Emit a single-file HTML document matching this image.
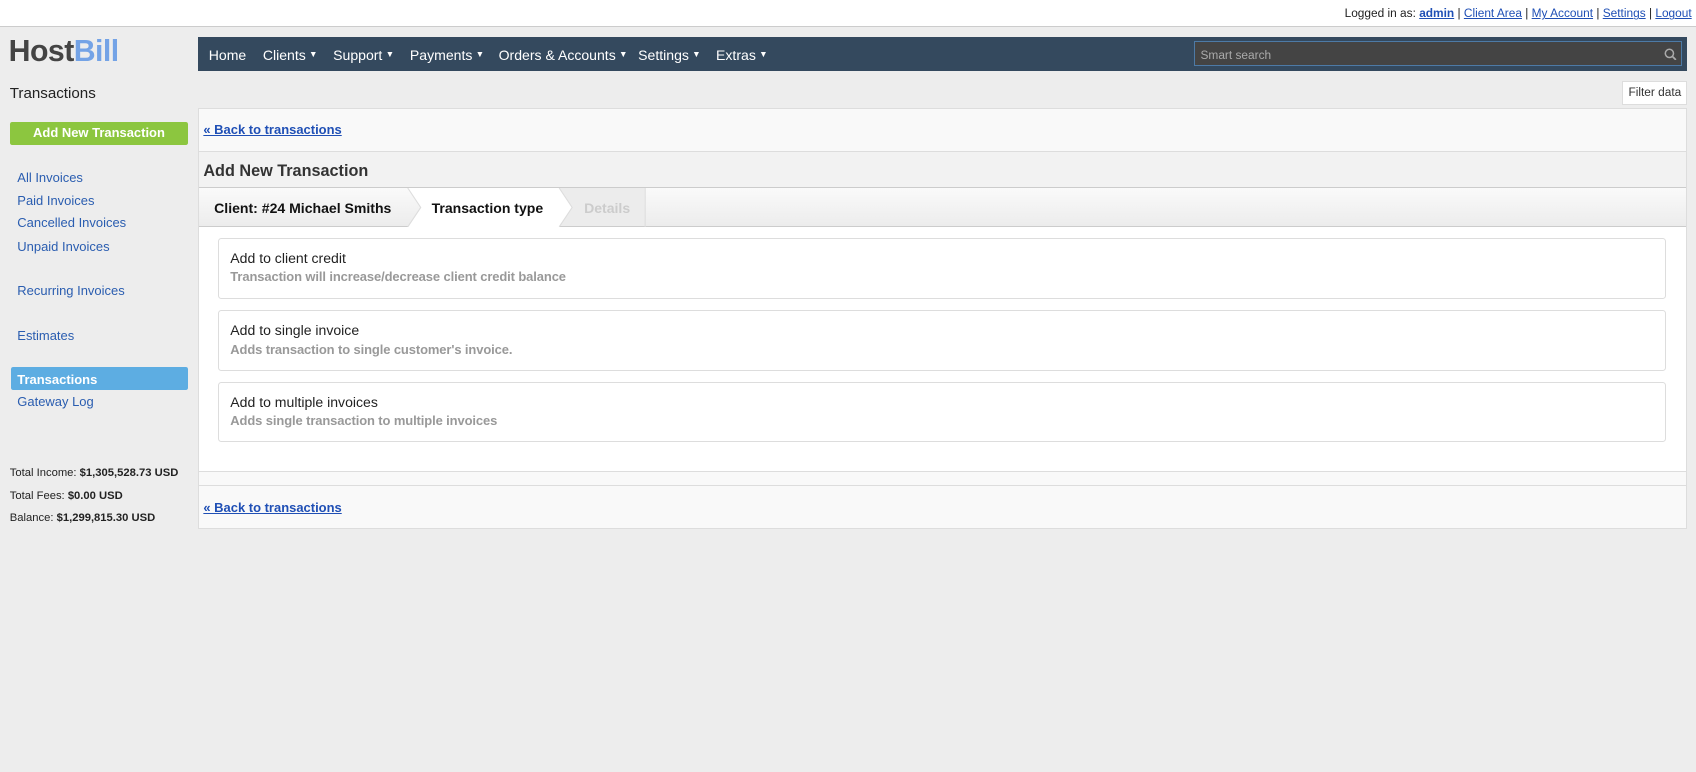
<!DOCTYPE html>
<html><head><meta charset="utf-8"><style>
html,body{margin:0;padding:0}
body{width:1568px;height:714px;background:#ededed;font-family:"Liberation Sans",Arial,sans-serif;position:relative;overflow:hidden;zoom:1.08163}
.a{position:absolute}
a{color:#1f4fb5}
.top{left:0;top:0;width:1568px;height:24px;background:#fff;border-bottom:1px solid #ccc}
.top div{position:absolute;right:4px;top:6px;font-size:11px;color:#222}
.top a{color:#1f4fb5}
.nav{left:183px;top:34px;width:1377px;height:32px;background:#34495e}
.nav span{position:absolute;top:9px;color:#fff;font-size:13px}
.nav span i{font-style:normal;font-size:8px;margin-left:3px;vertical-align:2px}
.search{left:1104px;top:38px;width:451px;height:23px;background:#444;border:1px solid #4d7aa6;box-sizing:border-box}
.side a{position:absolute;left:16px;font-size:12px;color:#2a5db0;text-decoration:none}
.box{left:202px;width:1338px;height:56px;background:#fff;border:1px solid #ddd;border-radius:3px;box-sizing:border-box}
.box b{position:absolute;left:10px;top:10px;font-size:13px;font-weight:normal;color:#222}
.box s{position:absolute;left:10px;top:28px;font-size:12px;font-weight:bold;color:#999;text-decoration:none;letter-spacing:-0.1px}
.tot{left:9px;font-size:10.4px;color:#222}
</style></head><body>
<div class="a top"><div>Logged in as: <a href="#"><b>admin</b></a> | <a href="#">Client Area</a> | <a href="#">My Account</a> | <a href="#">Settings</a> | <a href="#">Logout</a></div></div>
<div class="a" style="left:8px;top:32px;font-size:28px;font-weight:bold;letter-spacing:-0.5px"><span style="color:#444">Host</span><span style="color:#74a3e6">Bill</span></div>
<div class="a nav">
<span style="left:10px">Home</span>
<span style="left:60px">Clients<i>▼</i></span>
<span style="left:125px">Support<i>▼</i></span>
<span style="left:196px">Payments<i>▼</i></span>
<span style="left:278px">Orders &amp; Accounts<i>▼</i></span>
<span style="left:407px">Settings<i>▼</i></span>
<span style="left:479px">Extras<i>▼</i></span>
</div>
<div class="a search"><span style="position:absolute;left:5px;top:5px;font-size:11px;color:#aaa">Smart search</span>
<svg style="position:absolute;right:4px;top:5px" width="12" height="12" viewBox="0 0 12 12"><circle cx="5" cy="5" r="3.8" fill="none" stroke="#aaa" stroke-width="1.4"/><path d="M8 8l3 3" stroke="#aaa" stroke-width="1.6"/></svg></div>
<div class="a" style="left:9px;top:79px;font-size:14px;color:#222">Transactions</div>
<div class="a" style="left:1500px;top:75px;width:60px;height:22px;background:#fff;border:1px solid #ddd;box-sizing:border-box;font-size:11px;color:#333;text-align:center;line-height:20px">Filter data</div>
<div class="a" style="left:9px;top:113px;width:165px;height:21px;background:#8cc63f;border-radius:2px;color:#fff;font-weight:bold;font-size:12px;text-align:center;line-height:21px">Add New Transaction</div>
<div class="side">
<a style="top:157px">All Invoices</a><a style="top:178px">Paid Invoices</a><a style="top:199px">Cancelled Invoices</a><a style="top:221px">Unpaid Invoices</a>
<a style="top:262px">Recurring Invoices</a><a style="top:303px">Estimates</a>
<div class="a" style="left:10px;top:339px;width:164px;height:22px;background:#5dade2;border-radius:2px"></div>
<a style="top:344px;color:#fff;font-weight:bold">Transactions</a>
<a style="top:364px">Gateway Log</a>
</div>
<div class="a tot" style="top:432px">Total Income: <b>$1,305,528.73 USD</b></div>
<div class="a tot" style="top:453px">Total Fees: <b>$0.00 USD</b></div>
<div class="a tot" style="top:473px">Balance: <b>$1,299,815.30 USD</b></div>

<div class="a" style="left:183px;top:100px;width:1377px;height:389px;border:1px solid #ddd;box-sizing:border-box;background:#f9f9f9"></div>
<a class="a" href="#" style="left:188px;top:113px;font-size:12px;font-weight:bold">« Back to transactions</a>
<div class="a" style="left:184px;top:140px;width:1375px;height:34px;background:#f2f2f2;border-top:1px solid #ddd;border-bottom:1px solid #ccc;box-sizing:border-box"></div>
<div class="a" style="left:188px;top:150px;font-size:15px;font-weight:bold;color:#333">Add New Transaction</div>
<div class="a" style="left:184px;top:174px;width:1375px;height:36px;background:linear-gradient(#fafafa,#ececec);border-bottom:1px solid #ccc;box-sizing:border-box"></div>
<svg class="a" style="left:184px;top:174px" width="420" height="36">
<polygon points="193,0 333,0 345,18 333,36 205,36 205,36 193,36 205,18" fill="#fff"/>
<polygon points="333,0 412,0 412,35 333,35 345,18" fill="#ececec"/>
<polyline points="193,0 205,18 193,36" fill="none" stroke="#ddd"/>
<polyline points="333,0 345,18 333,36" fill="none" stroke="#ddd"/>
<line x1="412.5" y1="0" x2="412.5" y2="36" stroke="#ddd"/>
</svg>
<div class="a" style="left:198px;top:185px;font-size:13px;font-weight:bold;color:#111">Client: #24 Michael Smiths</div>
<div class="a" style="left:399px;top:185px;font-size:13px;font-weight:bold;color:#111">Transaction type</div>
<div class="a" style="left:540px;top:185px;font-size:13px;font-weight:bold;color:#ccc">Details</div>
<div class="a" style="left:184px;top:210px;width:1375px;height:225px;background:#fff;border-bottom:1px solid #ddd"></div>
<div class="a box" style="top:220px"><b>Add to client credit</b><s>Transaction will increase/decrease client credit balance</s></div>
<div class="a box" style="top:287px"><b>Add to single invoice</b><s>Adds transaction to single customer's invoice.</s></div>
<div class="a box" style="top:353px"><b>Add to multiple invoices</b><s>Adds single transaction to multiple invoices</s></div>
<div class="a" style="left:184px;top:448px;width:1375px;height:1px;background:#ddd"></div>
<a class="a" href="#" style="left:188px;top:462px;font-size:12px;font-weight:bold">« Back to transactions</a>
</body></html>
